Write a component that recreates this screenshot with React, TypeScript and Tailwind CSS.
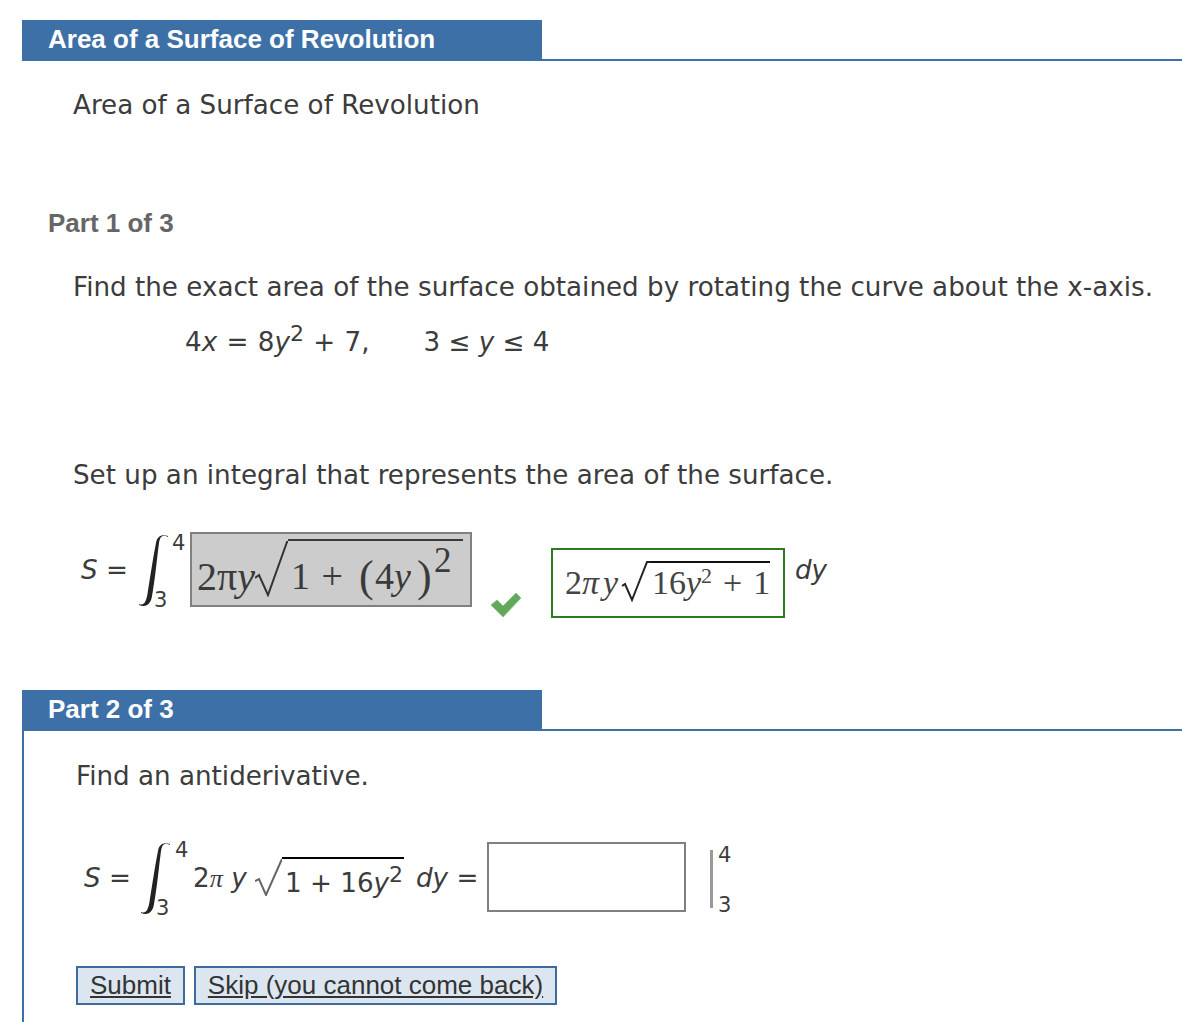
import React from "react";

const body = "font-['DejaVu_Sans',sans-serif] text-[26.2px] text-[#3c3c3c]";
const arial = "font-['Liberation_Sans',Arial,sans-serif]";
const serif = "font-['Liberation_Serif','Times_New_Roman',serif]";

function BlueHead({ title }: { title: string }) {
  return (
    <div className="flex items-end">
      <div className={`w-[520px] h-[41px] bg-[#3e70a8] pl-[26px] text-white font-bold text-[26px] leading-[38px] ${arial}`}>{title}</div>
      <div className="flex-1 h-[2px] bg-[#3e70a8]" />
    </div>
  );
}

function Integral({ className }: { className: string }) {
  return (
    <svg className={className} viewBox="0 0 34 74">
      <path
        d="M32 3C27 0 24 2 23 9C21 24 19 46 16 62C15 69 11 74 3 71L3 70C8 72 10 68 11.5 60C14 44 17 24 20 9C21 2 26 0 32 2Z"
        fill="#222"
      />
    </svg>
  );
}

function Limits({ className, lowerClass }: { className: string; lowerClass: string }) {
  return (
    <div className={`flex flex-col justify-between text-[21px] leading-[24px] w-[18px] shrink-0 ${className}`}>
      <span>4</span>
      <span className={lowerClass}>3</span>
    </div>
  );
}

function App() {
  return (
    <div className={`w-[1182px] h-[1022px] overflow-hidden bg-white pt-[20px] ${body}`}>
      <div className="ml-[22px]">
        <BlueHead title="Area of a Surface of Revolution" />
      </div>
      <p className="ml-[73px] mt-[29px] leading-[30px]">Area of a Surface of Revolution</p>
      <p className={`ml-[48px] mt-[88px] leading-[30px] text-[26px] font-bold text-[#666666] ${arial}`}>Part 1 of 3</p>

      <p className="ml-[73px] mt-[34px] leading-[30px] whitespace-nowrap">Find the exact area of the surface obtained by rotating the curve about the x-axis.</p>
      <div className="ml-[185px] mt-[25px] flex h-[30px] leading-[30px] whitespace-nowrap">
        <span className="[word-spacing:1px]">4<i>x</i> = 8<i>y</i><sup className="text-[22px] top-[-10px]">2</sup> + 7,</span>
        <span className="ml-[54px]">3 ≤ <i>y</i> ≤ 4</span>
      </div>

      <p className="ml-[73px] mt-[103px] leading-[30px]">Set up an integral that represents the area of the surface.</p>

      {/* part 1 answer row */}
      <div className="ml-[81px] mt-[42px] flex items-start h-[88px] whitespace-nowrap">
        <span className="mt-[23px] leading-[30px] w-[46px]"><i>S</i> =</span>
        <Integral className="ml-[9px] mt-[2px] w-[34px] h-[74px] shrink-0" />
        <Limits className="ml-[2px] mt-[-1px] h-[81px]" lowerClass="ml-[-18px]" />
        <div className={`w-[282px] h-[75px] bg-[#cccccc] border-2 border-[#808080] flex items-start text-[#3a3a3a] ${serif}`}>
          <span className="ml-[5px] mt-[21px] w-[58px] text-[40px] leading-[44px]">2π<i>y</i></span>
          <svg className="mt-[7px] w-[33px] h-[56px] shrink-0" viewBox="0 0 33 56" fill="none">
            <path d="M0 37L4 34L13 54L32 1H33" stroke="#333" strokeWidth="2" />
          </svg>
          <div className="mt-[5px] w-[175px] border-t-2 border-[#3a3a3a] flex items-start">
            <span className="ml-[3px] mt-[13px] w-[68px] text-[38px] leading-[44px] whitespace-pre">1 <span className="ml-[2px]">+</span> </span>
            <span className="mt-[12px] w-[16px] text-[44px] leading-[48px] font-light">(</span>
            <span className="mt-[13px] w-[42px] text-[38px] leading-[44px]">4<i>y</i></span>
            <span className="mt-[12px] w-[17px] text-[44px] leading-[48px] font-light">)</span>
            <span className="mt-[0px] text-[35px] leading-[40px]">2</span>
          </div>
        </div>
        <svg className="ml-[18px] mt-[60px] w-[32px] h-[26px] shrink-0" viewBox="0 0 32 26">
          <path d="M1 13L7 8L13 14L26 1L31 6L13 25Z" fill="#62a85a" stroke="#8dc487" strokeWidth="1" />
        </svg>
        <div className={`ml-[29px] mt-[16px] w-[234px] h-[70px] border-2 border-[#2e7a1f] flex items-start text-[#444444] ${serif}`}>
          <span className="ml-[12px] mt-[13px] w-[56px] text-[34px] leading-[40px] whitespace-pre">2<i>π</i><i className="ml-[4px]">y</i></span>
          <svg className="mt-[11px] w-[29px] h-[42px] shrink-0" viewBox="0 0 29 42" fill="none">
            <path d="M1 25L4 23L11 39L26 1H29" stroke="#222" strokeWidth="2" />
          </svg>
          <div className="mt-[11px] w-[120px] border-t-2 border-[#111]">
            <span className="block ml-[2px] mt-[0px] text-[34px] leading-[40px] whitespace-pre">16<i>y</i><sup className="text-[22px]">2</sup><span className="mx-[11px]">+</span>1</span>
          </div>
        </div>
        <span className="ml-[10px] mt-[23px] leading-[30px]"><i>dy</i></span>
      </div>

      <div className="mt-[70px] ml-[22px]">
        <BlueHead title="Part 2 of 3" />
        <div className="border-l-2 border-[#3e70a8] h-[292px] pl-[52px] pt-[30px]">
          <p className="leading-[30px]">Find an antiderivative.</p>

          <div className="mt-[51px] ml-[8px] flex items-start h-[72px] whitespace-nowrap">
            <span className="mt-[21px] leading-[30px] w-[46px]"><i>S</i> =</span>
            <Integral className="ml-[8px] w-[34px] h-[74px] shrink-0" />
            <Limits className="ml-[3px] mt-[-4px] h-[82px]" lowerClass="ml-[-19px]" />
            <span className="mt-[21px] w-[52px] leading-[30px] whitespace-pre">2<i className={serif}>π</i> <i>y</i></span>
            <svg className="ml-[10px] mt-[16px] w-[27px] h-[38px] shrink-0" viewBox="0 0 27 38" fill="none">
              <path d="M0 23L4 21L11 37L27 1" stroke="#666" strokeWidth="2" />
            </svg>
            <div className="mt-[15px] w-[122px] border-t-2 border-black">
              <span className="block pl-[3px] mt-[9px] leading-[30px] whitespace-pre">1 + 16<i>y</i><sup className="text-[22px] top-[-10px]">2</sup></span>
            </div>
            <span className="ml-[12px] mt-[21px] w-[71px] leading-[30px] whitespace-pre"><i>dy</i> =</span>
            <div className="w-[199px] h-[70px] border-2 border-[#808080] bg-white shrink-0" />
            <div className="ml-[24px] mt-[8px] w-[3px] h-[58px] bg-[#999999] shrink-0" />
            <Limits className="ml-[5px] mt-[1px] h-[74px]" lowerClass="" />
          </div>

          <div className={`mt-[52px] flex gap-[9px] text-[26px] text-[#333333] ${arial}`}>
            <button className="w-[109px] h-[39px] bg-[#dce6f0] border-2 border-[#3e6a9c] underline leading-[35px]">Submit</button>
            <button className="w-[363px] h-[39px] bg-[#dce6f0] border-2 border-[#3e6a9c] underline leading-[35px] whitespace-nowrap">Skip (you cannot come back)</button>
          </div>
        </div>
      </div>
    </div>
  );
}

export default App;
